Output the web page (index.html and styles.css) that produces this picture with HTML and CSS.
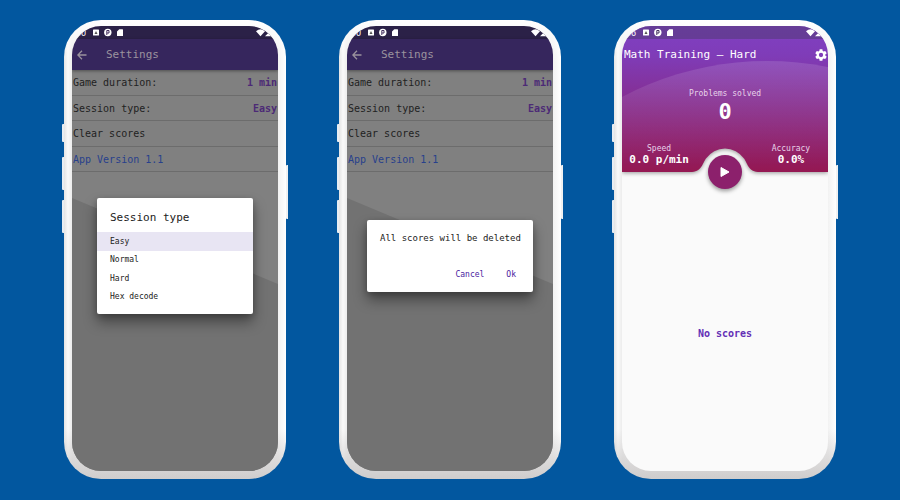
FILE: index.html
```html
<!DOCTYPE html>
<html lang="en">
<head>
<meta charset="utf-8">
<title>Math Training</title>
<link rel="stylesheet" href="styles.css">
</head>
<body>
<svg class="defs" aria-hidden="true">
  <symbol id="status-notes" viewBox="0 0 32 13">
    <rect x="1" y="3.5" width="6" height="6" rx=".6" fill="#fff"/>
    <path d="M2.500 8 4 5l1.500 3z" fill="#555"/>
    <circle cx="15.800" cy="6.500" r="3.700" fill="#fff"/>
    <path d="M14.800 9V4.500H17V7H15" fill="none" stroke="#43305f"/>
    <path d="M27.300 3.200h3.100q.6 0 .6.600v5.600q0 .6-.6.600h-4.800q-.6 0-.6-.6V5.500z" fill="#fff"/>
  </symbol>
  <symbol id="status-signal" viewBox="0 0 22 13">
    <path d="M0 5.200Q4.500 1.300 9 5.200L4.500 10.300z"/>
    <path d="M9 10.300 16 3.300v7z"/>
  </symbol>
  <symbol id="arrow-back" viewBox="0 0 10 10">
    <path d="M9.500 5H1M5 .8.800 5 5 9.200"/>
  </symbol>
</svg>
<main class="stage">

  <section class="phone dimmed">
    <i class="key key-a"></i><i class="key key-b"></i><i class="key key-c"></i><i class="key key-power"></i>
    <div class="screen">
      <div class="statusbar">
        <span class="clock">:00</span>
        <svg class="notes"><use href="#status-notes"/></svg>
        <svg class="signal"><use href="#status-signal"/></svg>
      </div>
      <header class="appbar">
        <a class="back" href="#" aria-label="Back"><svg><use href="#arrow-back"/></svg></a>
        <h1>Settings</h1>
      </header>
      <div class="content">
        <ul class="settings">
          <li><span>Game duration:</span><b>1 min</b></li>
          <li><span>Session type:</span><b>Easy</b></li>
          <li><span>Clear scores</span></li>
          <li><a href="#">App Version 1.1</a></li>
        </ul>
      </div>
      <div class="overlay">
        <div class="dialog picker" role="dialog" aria-labelledby="picker-title">
          <h2 id="picker-title">Session type</h2>
          <div class="options">
            <button class="selected">Easy</button>
            <button>Normal</button>
            <button>Hard</button>
            <button>Hex decode</button>
          </div>
        </div>
      </div>
    </div>
  </section>

  <section class="phone dimmed">
    <i class="key key-a"></i><i class="key key-b"></i><i class="key key-c"></i><i class="key key-power"></i>
    <div class="screen">
      <div class="statusbar">
        <span class="clock">:00</span>
        <svg class="notes"><use href="#status-notes"/></svg>
        <svg class="signal"><use href="#status-signal"/></svg>
      </div>
      <header class="appbar">
        <a class="back" href="#" aria-label="Back"><svg><use href="#arrow-back"/></svg></a>
        <h1>Settings</h1>
      </header>
      <div class="content">
        <ul class="settings">
          <li><span>Game duration:</span><b>1 min</b></li>
          <li><span>Session type:</span><b>Easy</b></li>
          <li><span>Clear scores</span></li>
          <li><a href="#">App Version 1.1</a></li>
        </ul>
      </div>
      <div class="overlay">
        <div class="dialog confirm" role="dialog" aria-labelledby="confirm-text">
          <p id="confirm-text">All scores will be deleted</p>
          <div class="actions">
            <button>Cancel</button>
            <button>Ok</button>
          </div>
        </div>
      </div>
    </div>
  </section>

  <section class="phone home">
    <i class="key key-a"></i><i class="key key-b"></i><i class="key key-c"></i><i class="key key-power"></i>
    <div class="screen">
      <div class="hero">
        <svg class="backdrop" viewBox="0 0 206 146" preserveAspectRatio="none" aria-hidden="true">
          <defs>
            <linearGradient id="fade" x1="0" y1="0" x2="0" y2="1">
              <stop offset="0" stop-color="#8040c2"/>
              <stop offset=".2" stop-color="#7f3cb8"/>
              <stop offset=".55" stop-color="#862c8c"/>
              <stop offset="1" stop-color="#951852"/>
            </linearGradient>
            <linearGradient id="shine" gradientUnits="userSpaceOnUse" x1="0" y1="35" x2="0" y2="140">
              <stop offset="0" stop-color="#fff" stop-opacity=".13"/>
              <stop offset="1" stop-color="#fff" stop-opacity="0"/>
            </linearGradient>
            <clipPath id="edge"><path d="M0 0H206V146H138C126 146 126 138 122 132.500A23 23 0 0 0 84 132.500C80 138 80 146 68 146H0z"/></clipPath>
          </defs>
          <g clip-path="url(#edge)">
            <rect width="206" height="146" fill="url(#fade)"/>
            <circle cx="145" cy="345" r="310" fill="url(#shine)"/>
          </g>
        </svg>
        <div class="statusbar">
          <span class="clock">:06</span>
          <svg class="notes"><use href="#status-notes"/></svg>
          <svg class="signal"><use href="#status-signal"/></svg>
        </div>
        <header class="titlebar">
          <h1>Math Training – Hard</h1>
          <button class="gear" aria-label="Settings"><svg viewBox="2 2 20 20"><path fill-rule="evenodd" d="M19.140 12.940c.04-.3.060-.61.060-.94s-.02-.64-.07-.94l2.030-1.580a.49.490 0 0 0 .12-.61l-1.920-3.320a.49.490 0 0 0-.59-.22l-2.390.960a7 7 0 0 0-1.620-.94l-.36-2.540A.48.480 0 0 0 13.920 2.400h-3.840a.48.480 0 0 0-.47.410l-.36 2.540a7.300 7.300 0 0 0-1.620.940l-2.390-.96a.48.480 0 0 0-.59.220L2.740 8.870a.47.470 0 0 0 .12.610l2.030 1.580a6 6 0 0 0 0 1.880l-2.030 1.580a.49.490 0 0 0-.12.610l1.920 3.320c.12.220.37.290.59.220l2.390-.96c.5.380 1.030.700 1.620.940l.36 2.540c.05.240.24.410.48.410h3.840c.24 0 .44-.17.470-.41l.36-2.540a7.300 7.300 0 0 0 1.620-.94l2.390.960c.22.080.47 0 .59-.22l1.920-3.320a.47.470 0 0 0-.12-.61zM12 15.600a3.600 3.600 0 1 1 0-7.200 3.600 3.600 0 0 1 0 7.200z"/></svg></button>
        </header>
        <div class="solved"><span>Problems solved</span><strong>0</strong></div>
        <div class="stats">
          <div><span>Speed</span><b>0.0 p/min</b></div>
          <div><span>Accuracy</span><b>0.0%</b></div>
        </div>
        <button class="play" aria-label="Start"><svg viewBox="0 0 10 12"><path d="M1 1.500v9L9 6z"/></svg></button>
      </div>
      <p class="empty">No scores</p>
    </div>
  </section>

</main>
</body>
</html>
```

FILE: styles.css
```css
* { box-sizing: border-box; margin: 0; padding: 0; }

body {
  background: #02579f;
  font-family: "DejaVu Sans Mono", "Liberation Mono", monospace;
  font-size: 10px;
  color: #222;
}

button { font: inherit; border: 0; background: none; color: inherit; }
a { color: inherit; text-decoration: none; }
ul { list-style: none; }
svg { display: block; }
.defs { position: absolute; width: 0; height: 0; }

.stage {
  display: flex;
  justify-content: center;
  gap: 53px;
  min-height: 100vh;
  padding: 20px 0 21px;
}

/* Device frame */
.phone {
  position: relative;
  display: flex;
  width: 222px;
  padding: 6px 8px 8px;
  border-radius: 37px;
  background:
    linear-gradient(to bottom, #fff 0, #fff0 40px, #fff0 calc(100% - 50px), #cfcdcd 100%),
    linear-gradient(to right, #e4e4e4, #fafafa 4px, #ececec 8px, #f2f2f2 calc(100% - 8px), #fff 100%);
}
.screen {
  position: relative;
  flex: 1;
  display: flex;
  flex-direction: column;
  overflow: hidden;
  border-radius: 29px;
  background: #fafafa;
}
.key {
  position: absolute;
  left: -2px;
  width: 2px;
  height: 33px;
  border-radius: 1px 0 0 1px;
  background: #e8edf2;
}
.key-a { top: 104px; height: 18px; }
.key-b { top: 137px; }
.key-c { top: 180px; }
.key-power { left: auto; right: -2px; top: 145px; height: 54px; background: #f1f1f1; }

.statusbar {
  display: flex;
  align-items: center;
  height: 13px;
  color: #fff;
}
.clock {
  width: 20px;
  padding-right: 6px;
  font-family: Roboto, sans-serif;
  font-size: 9px;
  text-align: right;
}
.notes { width: 32px; height: 13px; }
.signal { width: 22px; height: 13px; margin-left: auto; fill: #fff; }

/* Settings screens */
.dimmed .statusbar { background: #2b2147; }
.appbar {
  position: relative;
  z-index: 1;
  display: flex;
  align-items: center;
  gap: 19px;
  height: 31px;
  padding: 0 5px;
  background: #36265d;
  color: #9b939d;
  box-shadow: 0 1px 3px #0006;
}
.back svg { width: 10px; height: 10px; fill: none; stroke: #9b939d; stroke-width: 1.3; }
h1, h2 { font-size: 11px; font-weight: 400; line-height: 16px; }
.content {
  position: relative;
  flex: 1;
  background: #808080;
}
.content::before {
  content: "";
  position: absolute;
  inset: 0;
  background: #727272;
  clip-path: polygon(0 128px, 100% 214px, 100% 100%, 0 100%);
}
.settings {
  position: relative;
  display: grid;
  grid-template-rows: repeat(4, 1fr);
  height: 102px;
}
.settings li {
  display: flex;
  align-items: center;
  justify-content: space-between;
  padding: 1px 1px 0;
  border-bottom: 1px solid #6c6c6c;
}
.settings b { color: #4c2a76; }
.settings a { color: #28408c; }

.overlay {
  position: absolute;
  inset: 0;
  z-index: 2;
  display: flex;
  align-items: center;
  justify-content: center;
  padding-top: 15px;
}
.dialog {
  background: #fff;
  border-radius: 2px;
  box-shadow: 0 8px 14px #0006, 0 2px 6px #0003;
}
.picker { width: 156px; padding-bottom: 8px; }
.picker h2 { padding: 12px 13px 6px; }
.options { display: grid; grid-template-rows: repeat(4, 1fr); height: 74px; }
.options button { padding: 0 13px; font-size: 8px; text-align: left; }
.options .selected { background: #e8e5f3; }

.confirm { width: 166px; padding: 12px 13px 10px; }
.confirm p { font-size: 9px; line-height: 12px; white-space: nowrap; }
.actions {
  display: flex;
  justify-content: flex-end;
  gap: 22px;
  padding: 24px 4px 0 0;
  font-size: 8px;
  line-height: 14px;
  color: #4a22a0;
}

/* Home screen */
.hero {
  position: relative;
  display: flex;
  flex-direction: column;
  height: 146px;
  color: #fff;
}
.hero > * { position: relative; }
.hero .backdrop {
  position: absolute;
  inset: 0;
  width: 100%;
  height: 100%;
  filter: drop-shadow(0 1px 2px #0006);
}
.hero .statusbar { background: #4f3a7288; }
.titlebar {
  display: flex;
  align-items: center;
  justify-content: space-between;
  height: 31px;
  padding: 0 1px 0 2px;
}
.gear svg { width: 12px; height: 12px; fill: #fff; }
.solved {
  display: flex;
  flex-direction: column;
  align-items: center;
  padding-top: 18px;
}
.solved span, .stats span { font-size: 8px; line-height: 11px; color: #e8d3ea; }
.solved strong { font-size: 22px; line-height: 26px; }
.stats { display: flex; justify-content: space-between; padding-top: 18px; }
.stats div { display: flex; flex-direction: column; align-items: center; width: 36%; }
.stats b { font-size: 11px; line-height: 12px; }
.hero .play {
  position: absolute;
  left: calc(50% - 17px);
  bottom: -17px;
  display: grid;
  place-items: center;
  width: 34px;
  height: 34px;
  border-radius: 50%;
  background: #8c206c;
  box-shadow: 0 2px 4px #0006;
}
.play svg { width: 10px; height: 12px; fill: #fff; stroke: #fff; stroke-width: 1; stroke-linejoin: round; }
.empty {
  flex: 1;
  display: grid;
  place-items: center;
  padding-top: 24px;
  font-weight: 700;
  color: #642fb5;
}
```
